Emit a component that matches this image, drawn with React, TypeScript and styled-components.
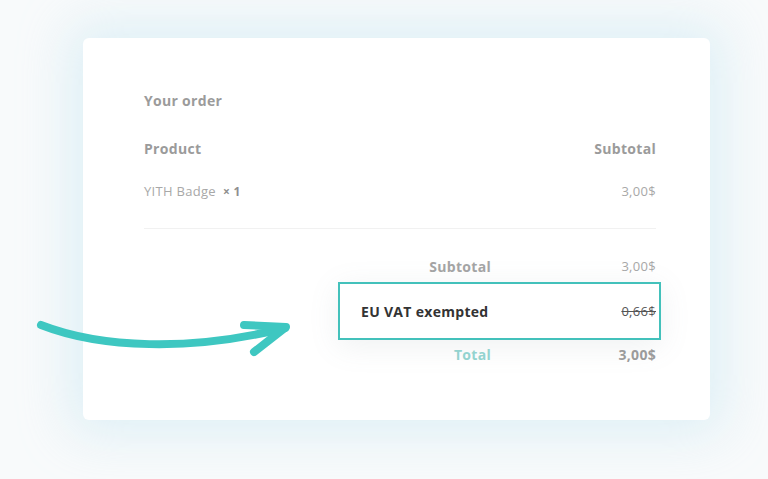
import styled, { createGlobalStyle } from "styled-components"

const GlobalStyle = createGlobalStyle`
  html, body {
    margin: 0;
    padding: 0;
    background: #f8fafb;
    font-family: "Open Sans", "Liberation Sans", sans-serif;
  }
`

const Page = styled.div`
  position: relative;
  width: 768px;
  height: 479px;
  overflow: hidden;
  padding: 38px 58px 0 83px;
  box-sizing: border-box;
`

const Card = styled.div`
  width: 627px;
  height: 382px;
  background: #ffffff;
  border-radius: 6px;
  box-shadow: 0 0 50px 14px rgba(214, 236, 244, 0.75);
  padding: 51px 54px 0 61px;
  box-sizing: border-box;
  letter-spacing: 0.3px;
`

const Title = styled.h2`
  margin: 0;
  font-size: 14px;
  line-height: 24px;
  font-weight: 700;
  color: #9b9b9b;
`

const Row = styled.div<{ top: number }>`
  display: flex;
  justify-content: space-between;
  align-items: center;
  height: 24px;
  margin-top: ${(p) => p.top}px;
`

const HeadCell = styled.span`
  font-size: 14px;
  font-weight: 700;
  color: #9b9b9b;
`

const Cell = styled.span`
  font-size: 13px;
  color: #a8a8a8;
`

const Qty = styled.strong`
  margin-left: 7px;
  font-size: 12px;
  font-weight: 700;
  color: #8f8f8f;
`

const Divider = styled.hr`
  margin: 25px 0 0;
  border: 0;
  border-top: 1px solid #f1f1f1;
`

const Totals = styled.div`
  margin: 21px -5px 0 194px;
  display: flex;
  flex-direction: column;
`

const TotalRow = styled.div<{ h: number }>`
  display: grid;
  grid-template-columns: 1fr 165px;
  align-items: center;
  height: ${(p) => p.h}px;
  padding-right: 5px;
`

const Label = styled.span<{ accent?: boolean }>`
  text-align: right;
  font-size: 14px;
  font-weight: 700;
  color: ${(p) => (p.accent ? "#93d3cf" : "#a5a5a5")};
`

const Value = styled.span<{ bold?: boolean }>`
  text-align: right;
  font-size: ${(p) => (p.bold ? 14 : 13)}px;
  font-weight: ${(p) => (p.bold ? 700 : 400)};
  color: ${(p) => (p.bold ? "#9b9b9b" : "#a8a8a8")};
`

const Highlight = styled.div`
  display: flex;
  justify-content: space-between;
  align-items: center;
  height: 58px;
  box-sizing: border-box;
  border: 2px solid #43c1bb;
  background: #ffffff;
  padding: 0 3px 0 21px;
  box-shadow: 0 6px 30px rgba(120, 140, 150, 0.12);
`

const HighlightLabel = styled.span`
  font-size: 14px;
  font-weight: 700;
  color: #333333;
`

const Struck = styled.del`
  font-size: 13px;
  color: #555555;
`

const Arrow = styled.svg`
  position: absolute;
  left: 0;
  top: 0;
  pointer-events: none;
`

export default function App() {
  return (
    <>
      <GlobalStyle />
      <Page>
        <Card>
          <Title>Your order</Title>
          <Row top={23}>
            <HeadCell>Product</HeadCell>
            <HeadCell>Subtotal</HeadCell>
          </Row>
          <Row top={19}>
            <Cell>
              YITH Badge<Qty>× 1</Qty>
            </Cell>
            <Cell>3,00$</Cell>
          </Row>
          <Divider />
          <Totals>
            <TotalRow h={32}>
              <Label>Subtotal</Label>
              <Value>3,00$</Value>
            </TotalRow>
            <Highlight>
              <HighlightLabel>EU VAT exempted</HighlightLabel>
              <Struck>0,66$</Struck>
            </Highlight>
            <TotalRow h={28}>
              <Label accent>Total</Label>
              <Value bold>3,00$</Value>
            </TotalRow>
          </Totals>
        </Card>
        <Arrow width="768" height="479" viewBox="0 0 768 479">
          <g fill="none" stroke="#3ec7c1" strokeWidth="8" strokeLinecap="round" strokeLinejoin="round">
            <path d="M41 325 C 100 348, 190 352, 285 328" />
            <path d="M244 325 L 286 327 L 254 352" />
          </g>
        </Arrow>
      </Page>
    </>
  )
}
